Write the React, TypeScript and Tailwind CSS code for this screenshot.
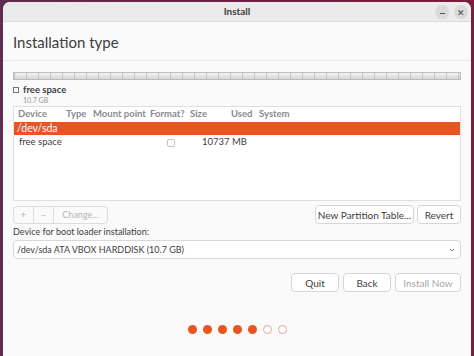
import React from 'react';

const font = { fontFamily: 'Lato, "Noto Sans", sans-serif' };

const Btn: React.FC<{ label: string; disabled?: boolean; className?: string }> = ({ label, disabled, className = '' }) => (
  <button
    className={`h-[19px] rounded-[4px] border border-[#d6d6d6] bg-white text-[10px] leading-none whitespace-nowrap ${disabled ? 'text-[#a8a8a8]' : 'text-[#3d3d3d]'} ${className}`}
  >
    {label}
  </button>
);

export default function App() {
  const headers = [
    { t: 'Device', w: 'w-[48px]' },
    { t: 'Type', w: 'w-[27px]' },
    { t: 'Mount point', w: 'w-[57px]' },
    { t: 'Format?', w: 'w-[40px]' },
    { t: 'Size', w: 'w-[41px]' },
    { t: 'Used', w: 'w-[28px]' },
    { t: 'System', w: 'flex-1' },
  ];
  const dots = [1, 1, 1, 1, 1, 0, 0];

  return (
    <div
      className="w-[474px] h-[356px] overflow-hidden bg-gradient-to-r from-[#5e2d4f] via-[#6a2347] to-[#7b1d3c] pt-[2px] px-[3px]"
      style={font}
    >
      <div className="h-[354px] w-[468px] bg-[#fafafa] rounded-t-[7px] flex flex-col overflow-hidden">
        {/* Title bar */}
        <div className="h-[20px] bg-[#ebebeb] border-b border-[#dcdcdc] flex items-center relative">
          <div className="flex-1 text-center text-[10px] font-bold text-[#3d3d3d]">Install</div>
          <div className="absolute right-[3px] top-[3px] flex gap-[5px]">
            <div className="w-[14px] h-[14px] rounded-full bg-[#dadada] flex items-center justify-center">
              <div className="w-[5px] h-[1px] bg-[#555] mt-[3px]" />
            </div>
            <div className="w-[14px] h-[14px] rounded-full bg-[#dadada] flex items-center justify-center text-[9px] text-[#444] leading-none">
              ✕
            </div>
          </div>
        </div>

        {/* Heading */}
        <div className="h-[39px] px-[10px] flex items-center border-b border-[#e6e6e6]">
          <div className="text-[15px] text-[#3d3d3d] pt-[2px]">Installation type</div>
        </div>

        <div className="px-[10px] flex flex-col">
          {/* Partition bar */}
          <div className="mt-[11px] h-[8px] border border-[#bdbdbd] bg-[repeating-linear-gradient(90deg,#c3c3c3_0px,#c3c3c3_1px,transparent_1px,transparent_12px),linear-gradient(#f4f4f4,#d4d4d4)]" />

          {/* Legend */}
          <div className="mt-[4px] flex items-start gap-[4px]">
            <div className="w-[6px] h-[6px] border border-[#777] mt-[3px]" />
            <div className="flex flex-col">
              <div className="text-[9.5px] font-bold text-[#3d3d3d] leading-[12px]">free space</div>
              <div className="text-[7px] text-[#999] leading-[8px]">10.7 GB</div>
            </div>
          </div>

          {/* Table */}
          <div className="mt-[2px] h-[95px] border border-[#e0e0e0] bg-white flex flex-col">
            <div className="h-[15px] flex items-center px-[4px] text-[9.5px] font-bold text-[#8a8a8a] whitespace-nowrap">
              {headers.map((h) => (
                <div key={h.t} className={h.w}>
                  {h.t}
                </div>
              ))}
            </div>
            <div className="h-[13px] bg-[#e95420] flex items-center px-[3px] text-[10.5px] text-white">/dev/sda</div>
            <div className="h-[15px] flex items-center px-[5px] text-[9.5px] text-[#3d3d3d]">
              <div className="w-[143px]">free space</div>
              <div className="w-[40px]">
                <div className="w-[8px] h-[8px] border border-[#c4c4c4] rounded-[2px] ml-[5px]" />
              </div>
              <div>10737 MB</div>
            </div>
          </div>

          {/* Table buttons */}
          <div className="mt-[4px] flex items-center">
            <div className="flex h-[18px] rounded-[4px] border border-[#dcdcdc] bg-[#fafafa] text-[10px] text-[#b5b5b5]">
              <div className="w-[20px] flex items-center justify-center border-r border-[#dcdcdc]">+</div>
              <div className="w-[20px] flex items-center justify-center border-r border-[#dcdcdc]">–</div>
              <div className="w-[53px] flex items-center justify-center text-[9px]">Change...</div>
            </div>
            <div className="flex-1" />
            <Btn label="New Partition Table..." className="w-[99px] h-[18px] text-[9px]" />
            <Btn label="Revert" className="w-[44px] h-[18px] ml-[3px] text-[9px]" />
          </div>

          {/* Boot loader */}
          <div className="mt-[2px] text-[9px] text-[#3d3d3d] leading-[12px]">Device for boot loader installation:</div>
          <div className="mt-[2px] h-[19px] rounded-[4px] border border-[#d8d8d8] bg-white flex items-center pl-[3px] pr-[4px] text-[9px] text-[#3d3d3d]">
            <div className="flex-1">/dev/sda ATA VBOX HARDDISK (10.7 GB)</div>
            <svg width="8" height="8" viewBox="0 0 8 8">
              <path d="M2 3 L4 5 L6 3" stroke="#888" strokeWidth="1" fill="none" />
            </svg>
          </div>

          {/* Nav buttons */}
          <div className="mt-[14px] flex justify-end gap-[4px]">
            <Btn label="Quit" className="w-[48px]" />
            <Btn label="Back" className="w-[48px]" />
            <Btn label="Install Now" disabled className="w-[66px]" />
          </div>

          {/* Progress dots */}
          <div className="mt-[33px] flex justify-center gap-[6px]">
            {dots.map((d, i) => (
              <div
                key={i}
                className={
                  d
                    ? 'w-[9px] h-[9px] rounded-full bg-[#e95420]'
                    : 'w-[9px] h-[9px] rounded-full border border-[#e0a58f] bg-white'
                }
              />
            ))}
          </div>
        </div>
      </div>
    </div>
  );
}
